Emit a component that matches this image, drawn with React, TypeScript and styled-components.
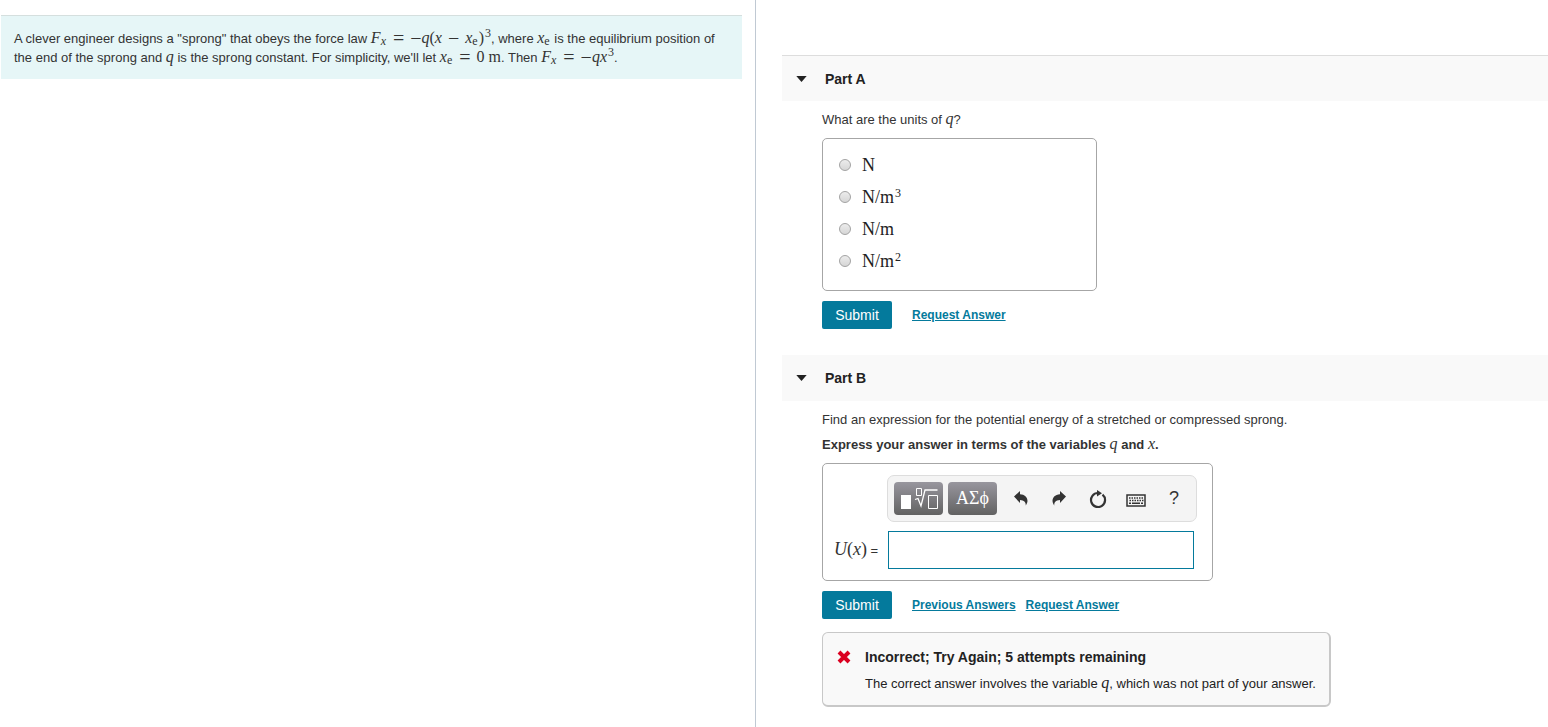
import React from "react";
import styled, { createGlobalStyle } from "styled-components";

const teal = "#047a9c";
const sans = '"Liberation Sans", Arial, sans-serif';
const serif = '"Liberation Serif", "Times New Roman", serif';

const GlobalStyle = createGlobalStyle`
  * { box-sizing: border-box; }
  body {
    margin: 0;
    background: #fff;
    color: #333;
    font-family: ${sans};
    font-size: 13px;
    line-height: 19px;
  }
`;

const Page = styled.div`
  display: grid;
  grid-template-columns: minmax(0, 756fr) minmax(0, 792fr);
  min-height: 100vh;
`;

const ProblemPane = styled.aside`
  padding: 15px 13px 0 1px;
  border-right: 1px solid #c0c9d3;
`;

const Intro = styled.p`
  margin: 0;
  padding: 13px 20px 12px 13px;
  border-top: 1px solid #d5dfde;
  background: #e6f6f7;
`;

const AnswerPane = styled.main`
  padding: 55px 0 20px 26px;
`;

const Part = styled.section`
  margin-bottom: 26px;

  &:last-child {
    margin-bottom: 0;
  }
`;

const PartHeader = styled.header<{ $first?: boolean }>`
  display: flex;
  height: 46px;
  border-top: ${(p) => (p.$first ? "1px solid #ddd" : "0")};
  background: #f9f9f9;
`;

const Toggle = styled.button`
  display: flex;
  align-items: center;
  gap: 18px;
  padding: 0 14px;
  border: 0;
  background: none;
  color: #222;
  font: bold 14px ${sans};
`;

const PartBody = styled.div`
  padding: 9px 20px 0 40px;
`;

const Prompt = styled.p<{ $strong?: boolean }>`
  margin: 0 0 ${(p) => (p.$strong ? "9px" : "6px")};
  font-weight: ${(p) => (p.$strong ? "bold" : "normal")};
`;

const Choices = styled.fieldset`
  display: flex;
  flex-direction: column;
  gap: 12px;
  width: 275px;
  max-width: 100%;
  height: 153px;
  margin: 9px 0 10px;
  padding: 16px;
  border: 1px solid #a6a6a6;
  border-radius: 5px;
`;

const Choice = styled.label`
  display: flex;
  align-items: center;
  gap: 11px;
  height: 20px;
  color: #222;
`;

const Radio = styled.input`
  appearance: none;
  width: 12px;
  height: 12px;
  margin: 0;
  border: 1px solid #a3a3a3;
  border-radius: 50%;
  background: linear-gradient(#ececec, #d6d6d6);
  &:checked {
    background: radial-gradient(#444 35%, #ddd 40%);
  }
`;

const Actions = styled.div`
  display: flex;
  align-items: center;
  gap: 10px;
`;

const Submit = styled.button`
  width: 70px;
  height: 28px;
  margin-right: 10px;
  padding: 0;
  border: 0;
  border-radius: 2px;
  background: ${teal};
  color: #fff;
  font: 14px ${sans};
`;

const ActionLink = styled.a`
  color: ${teal};
  font-size: 12px;
  font-weight: bold;
`;

const Math = styled.span<{ $large?: boolean }>`
  font-family: ${serif};
  font-size: ${(p) => (p.$large ? "18px" : "16px")};
  line-height: 16px;
  font-weight: normal;
  white-space: nowrap;
  sub, sup {
    font-size: 12px;
    line-height: 1px;
  }
  sub {
    margin-right: 1px;
    vertical-align: -2px;
  }
  sup {
    margin-left: 1px;
    vertical-align: 6px;
  }
`;

const Op = styled.span<{ $prefix?: boolean }>`
  margin: 0 ${(p) => (p.$prefix ? "0" : "6px")};
  font-size: 20px;
  line-height: 1px;
  vertical-align: -2px;
`;

const Editor = styled.div`
  display: grid;
  grid-template-columns: 54px 1fr;
  row-gap: 9px;
  width: 391px;
  max-width: 100%;
  margin-bottom: 10px;
  padding: 11px 15px 11px 11px;
  border: 1px solid #a6a6a6;
  border-radius: 5px;
`;

const Toolbar = styled.div`
  grid-column: 2;
  display: flex;
  align-items: center;
  height: 47px;
  margin-left: -1px;
  padding: 0 3px 0 6px;
  border: 1px solid #ddd;
  border-radius: 7px;
  background: #f4f4f4;
`;

const PaletteButton = styled.button`
  flex: none;
  display: flex;
  align-items: center;
  justify-content: center;
  width: 49px;
  height: 33px;
  margin-right: 5px;
  padding: 0;
  border: 0;
  border-radius: 4px;
  background: linear-gradient(#98969e, #626262);
  color: #fff;
  font: 18px ${serif};
`;

const ToolButton = styled.button`
  flex: 1;
  display: flex;
  align-items: center;
  justify-content: center;
  height: 33px;
  padding: 0;
  border: 0;
  background: none;
  color: #333;
  font: 18px ${sans};
`;

const EditorLabel = styled.label`
  align-self: center;
  white-space: nowrap;
`;

const AnswerInput = styled.input`
  width: 306px;
  max-width: 100%;
  height: 38px;
  padding: 0 8px;
  border: 1px solid ${teal};
  background: #fff;
  font: 17px ${serif};
`;

const Feedback = styled.div`
  display: grid;
  grid-template-columns: 14px auto;
  column-gap: 14px;
  row-gap: 7px;
  align-items: center;
  width: fit-content;
  margin-top: 13px;
  padding: 15px 13px 12px 14px;
  border: 1px solid #c8c8c8;
  border-width: 1px 2px 2px 1px;
  border-radius: 6px;
  background: #f9f9f9;
  color: #222;
`;

const FeedbackTitle = styled.strong`
  font-size: 14px;
`;

const FeedbackText = styled.span`
  grid-column: 2;
`;

const Caret = () => (
  <svg width="11" height="6" viewBox="0 0 11 6" aria-hidden="true">
    <path d="M0.3 0H10.7L5.5 6Z" fill="#222" />
  </svg>
);

const TemplateIcon = () => (
  <svg width="39" height="24" viewBox="0 0 39 24" fill="none" stroke="#fff" aria-hidden="true">
    <path d="M2 8h10v14H2z" fill="#fff" stroke="none" />
    <path d="M17.500 1.500h5v7h-5z" />
    <path d="M16 12.500l3-1 3 7.500 4-16h12.500" strokeWidth="1.300" />
    <path d="M29.500 8.500h9v13h-9z" />
  </svg>
);

const arrow = "M0 5.500 6 0v3.200c5 .2 8 3.400 7.400 7.600-.2 1.500-1 2.700-1.700 3.700.3-3-1.200-5.300-5.700-5.500v3Z";

const UndoIcon = () => (
  <svg width="14" height="15" viewBox="0 0 14 15" aria-hidden="true">
    <path d={arrow} fill="#333" />
  </svg>
);

const RedoIcon = () => (
  <svg width="14" height="15" viewBox="0 0 14 15" aria-hidden="true">
    <path d={arrow} fill="#333" transform="translate(14 0) scale(-1 1)" />
  </svg>
);

const ResetIcon = () => (
  <svg width="18" height="18" viewBox="0 0 18 18" aria-hidden="true">
    <path d="M13.500 4.600A7 7 0 1 1 9 3" fill="none" stroke="#333" strokeWidth="2.200" />
    <path d="M8 0 13 3.300 8 6.600Z" fill="#333" />
  </svg>
);

const KeyboardIcon = () => (
  <svg width="20" height="17" viewBox="0 -4 20 17" fill="none" stroke="#333" aria-hidden="true">
    <path d="M1 1h18v11H1z" strokeWidth="1.500" />
    <path d="M3 4h14" strokeWidth="1.500" strokeDasharray="1.500 1" />
    <path d="M3.500 6.500h14" strokeWidth="1.500" strokeDasharray="1.500 1" />
    <path d="M3 9.300h2M6 9.300h8M15 9.300h2" strokeWidth="1.500" />
  </svg>
);

const CrossIcon = () => (
  <svg width="14" height="16" viewBox="0 0 14 16" aria-hidden="true">
    <path d="M2 2l10 10M12 2L2 12" stroke="#db0020" strokeWidth="4" />
  </svg>
);

const Fx = () => (
  <>
    <i>F</i>
    <sub><i>x</i></sub>
  </>
);

const Xe = () => (
  <>
    <i>x</i>
    <sub>e</sub>
  </>
);

const units: { id: string; label: React.ReactNode }[] = [
  { id: "n", label: "N" },
  { id: "nm3", label: <>N/m<sup>3</sup></> },
  { id: "nm", label: "N/m" },
  { id: "nm2", label: <>N/m<sup>2</sup></> },
];

export default function App() {
  return (
    <>
      <GlobalStyle />
      <Page>
        <ProblemPane>
          <Intro>
            A clever engineer designs a "sprong" that obeys the force law{" "}
            <Math>
              <Fx /><Op>=</Op><Op $prefix>−</Op><i>q</i>(<i>x</i><Op>−</Op><Xe />)<sup>3</sup>
            </Math>
            , where <Math><Xe /></Math> is the equilibrium position of the end of the sprong and{" "}
            <Math><i>q</i></Math> is the sprong constant. For simplicity, we'll let{" "}
            <Math><Xe /><Op>=</Op>0 m</Math>. Then{" "}
            <Math><Fx /><Op>=</Op><Op $prefix>−</Op><i>qx</i><sup>3</sup></Math>.
          </Intro>
        </ProblemPane>
        <AnswerPane>
          <Part>
            <PartHeader $first>
              <Toggle type="button"><Caret />Part A</Toggle>
            </PartHeader>
            <PartBody>
              <Prompt>What are the units of <Math><i>q</i></Math>?</Prompt>
              <Choices aria-label="Units of q">
                {units.map((unit) => (
                  <Choice key={unit.id}>
                    <Radio type="radio" name="units" value={unit.id} />
                    <Math $large>{unit.label}</Math>
                  </Choice>
                ))}
              </Choices>
              <Actions>
                <Submit type="button">Submit</Submit>
                <ActionLink href="#request-a">Request Answer</ActionLink>
              </Actions>
            </PartBody>
          </Part>
          <Part>
            <PartHeader>
              <Toggle type="button"><Caret />Part B</Toggle>
            </PartHeader>
            <PartBody>
              <Prompt>Find an expression for the potential energy of a stretched or compressed sprong.</Prompt>
              <Prompt $strong>
                Express your answer in terms of the variables <Math><i>q</i></Math> and <Math><i>x</i></Math>.
              </Prompt>
              <Editor>
                <Toolbar role="toolbar" aria-label="Equation tools">
                  <PaletteButton type="button" aria-label="Templates"><TemplateIcon /></PaletteButton>
                  <PaletteButton type="button" aria-label="Symbols">ΑΣϕ</PaletteButton>
                  <ToolButton type="button" aria-label="Undo"><UndoIcon /></ToolButton>
                  <ToolButton type="button" aria-label="Redo"><RedoIcon /></ToolButton>
                  <ToolButton type="button" aria-label="Reset"><ResetIcon /></ToolButton>
                  <ToolButton type="button" aria-label="Keyboard shortcuts"><KeyboardIcon /></ToolButton>
                  <ToolButton type="button" aria-label="Help">?</ToolButton>
                </Toolbar>
                <EditorLabel htmlFor="answer"><Math $large><i>U</i>(<i>x</i>)</Math> =</EditorLabel>
                <AnswerInput id="answer" type="text" />
              </Editor>
              <Actions>
                <Submit type="button">Submit</Submit>
                <ActionLink href="#previous">Previous Answers</ActionLink>
                <ActionLink href="#request-b">Request Answer</ActionLink>
              </Actions>
              <Feedback role="status">
                <CrossIcon />
                <FeedbackTitle>Incorrect; Try Again; 5 attempts remaining</FeedbackTitle>
                <FeedbackText>
                  The correct answer involves the variable <Math><i>q</i></Math>, which was not part of your answer.
                </FeedbackText>
              </Feedback>
            </PartBody>
          </Part>
        </AnswerPane>
      </Page>
    </>
  );
}
